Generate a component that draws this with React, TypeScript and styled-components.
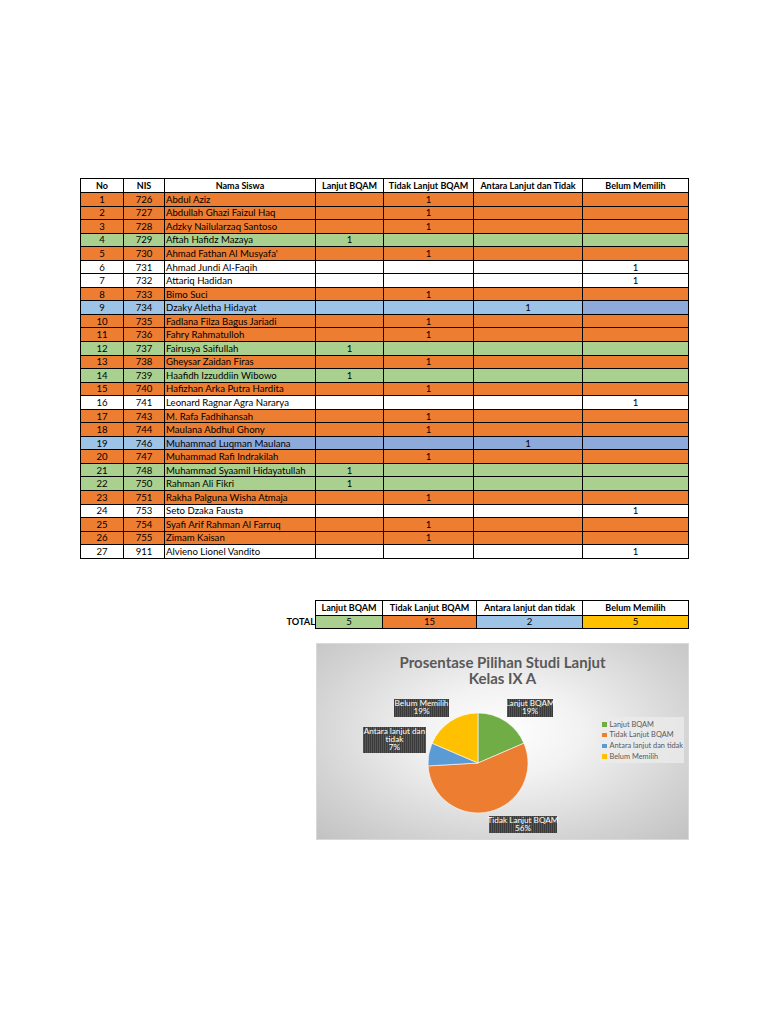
import React from "react";
import styled, { createGlobalStyle } from "styled-components";

const GlobalStyle = createGlobalStyle`
  html, body { margin: 0; padding: 0; background: #ffffff; }
  body { font-family: Lato, "Open Sans", "Liberation Sans", sans-serif; color: #000; }
`;

type Cat = "L" | "T" | "A" | "B";

const COLORS = {
  L: "#a9d08e",
  T: "#ed7d31",
  A: "#8eaadb",
  Alight: "#9dc3e6",
  B: "#ffffff",
  Y: "#ffc000",
};

const rows: [number, number, string, Cat, number?][] = [
  [1, 726, "Abdul Aziz", "T"],
  [2, 727, "Abdullah Ghazi Faizul Haq", "T"],
  [3, 728, "Adzky Nailularzaq Santoso", "T"],
  [4, 729, "Aftah Hafidz Mazaya", "L"],
  [5, 730, "Ahmad Fathan Al Musyafa'", "T"],
  [6, 731, "Ahmad Jundi Al-Faqih", "B"],
  [7, 732, "Attariq Hadidan", "B"],
  [8, 733, "Bimo Suci", "T"],
  [9, 734, "Dzaky Aletha Hidayat", "A", 6],
  [10, 735, "Fadlana Filza Bagus Jariadi", "T"],
  [11, 736, "Fahry Rahmatulloh", "T"],
  [12, 737, "Fairusya Saifullah", "L"],
  [13, 738, "Gheysar Zaidan Firas", "T"],
  [14, 739, "Haafidh Izzuddiin Wibowo", "L"],
  [15, 740, "Hafizhan Arka Putra Hardita", "T"],
  [16, 741, "Leonard Ragnar Agra Nararya", "B"],
  [17, 743, "M. Rafa Fadhihansah", "T"],
  [18, 744, "Maulana Abdhul Ghony", "T"],
  [19, 746, "Muhammad Luqman Maulana", "A", 2],
  [20, 747, "Muhammad Rafi Indrakilah", "T"],
  [21, 748, "Muhammad Syaamil Hidayatullah", "L"],
  [22, 750, "Rahman Ali Fikri", "L"],
  [23, 751, "Rakha Palguna Wisha Atmaja", "T"],
  [24, 753, "Seto Dzaka Fausta", "B"],
  [25, 754, "Syafi Arif Rahman Al Farruq", "T"],
  [26, 755, "Zimam Kaisan", "T"],
  [27, 911, "Alvieno Lionel Vandito", "B"],
];

const Page = styled.div`
  padding: 178px 0 0 80px;
  width: 688px;
`;

const Sheet = styled.table`
  border-collapse: collapse;
  table-layout: fixed;
  font-size: 9.6px;
`;

const HeadCell = styled.th<{ $w: number }>`
  width: ${(p) => p.$w}px;
  height: 13px;
  border: 1px solid #000;
  font-weight: 700;
  font-size: 9px;
  padding: 0;
  text-align: center;
  line-height: 11px;
  white-space: nowrap;
  overflow: hidden;
  background: #fff;
`;

const Row = styled.tr`
  height: 13.55px;
`;

const Cell = styled.td<{ $bg: string; $left?: boolean }>`
  border: 1px solid #000;
  background: ${(p) => p.$bg};
  padding: ${(p) => (p.$left ? "0 0 0 1px" : "0")};
  line-height: 11px;
  text-align: ${(p) => (p.$left ? "left" : "center")};
  white-space: nowrap;
  overflow: hidden;
`;

const TotalsTable = styled.table`
  border-collapse: collapse;
  table-layout: fixed;
  margin-top: 41px;
  font-size: 9.6px;
`;

const LabelCell = styled.td`
  width: 235px;
  padding: 0;
  text-align: right;
  font-weight: 700;
  font-size: 9.2px;
  line-height: 11px;
`;

const BlankCell = styled.td`
  width: 235px;
  padding: 0;
`;

const TotHead = styled.th<{ $w: number }>`
  width: ${(p) => p.$w}px;
  height: 14px;
  border: 1px solid #000;
  font-weight: 700;
  font-size: 9px;
  text-align: center;
  line-height: 11px;
  padding: 0;
  white-space: nowrap;
`;

const TotCell = styled.td<{ $bg: string }>`
  height: 12px;
  border: 1px solid #000;
  background: ${(p) => p.$bg};
  text-align: center;
  line-height: 11px;
  padding: 0;
`;

const Chart = styled.div`
  margin: 14px 0 0 236px;
  width: 373px;
  height: 197px;
  box-sizing: border-box;
  border: 1px solid #d9d9d9;
  background: radial-gradient(ellipse at 50% 45%, #ffffff 0%, #f2f2f2 30%, #d2d2d2 75%, #c2c2c2 100%);
  display: flex;
  flex-direction: column;
  font-family: Lato, "Open Sans", "Liberation Sans", sans-serif;
`;

const ChartTitle = styled.div`
  margin-top: 10px;
  height: 36px;
  text-align: center;
  font-size: 15px;
  line-height: 16px;
  font-weight: 700;
  color: #595959;
`;

const ChartBody = styled.div`
  display: flex;
  align-items: flex-start;
`;

const Legend = styled.div`
  margin-top: 28px;
  margin-left: 2px;
  width: 85px;
  height: 46px;
  box-sizing: border-box;
  padding: 3px 0 0 3px;
  background: rgba(235, 235, 235, 0.8);
  display: flex;
  flex-direction: column;
  gap: 1px;
`;

const LegendItem = styled.div`
  display: flex;
  align-items: center;
  gap: 3px;
  font-size: 7.4px;
  line-height: 9.6px;
  color: #595959;
  white-space: nowrap;
`;

const Swatch = styled.span<{ $c: string }>`
  width: 4.5px;
  height: 4.5px;
  background: ${(p) => p.$c};
  flex: none;
`;

const PIE = [
  { v: 5, c: "#70ad47" },
  { v: 15, c: "#ed7d31" },
  { v: 2, c: "#5b9bd5" },
  { v: 5, c: "#ffc000" },
];

function PieSvg() {
  const cx = 161;
  const cy = 74;
  const r = 50;
  const total = PIE.reduce((s, p) => s + p.v, 0);
  let a = -Math.PI / 2;
  const paths = PIE.map((p, i) => {
    const a2 = a + (p.v / total) * Math.PI * 2;
    const x1 = cx + r * Math.cos(a);
    const y1 = cy + r * Math.sin(a);
    const x2 = cx + r * Math.cos(a2);
    const y2 = cy + r * Math.sin(a2);
    const large = a2 - a > Math.PI ? 1 : 0;
    a = a2;
    return (
      <path
        key={i}
        d={`M${cx},${cy} L${x1},${y1} A${r},${r} 0 ${large} 1 ${x2},${y2} Z`}
        fill={p.c}
        stroke="#ffffff"
        strokeWidth={0.6}
      />
    );
  });
  const boxes = [
    { x: 77, y: 10, w: 55, h: 18, lines: ["Belum Memilih", "19%"] },
    { x: 190, y: 10, w: 46, h: 18, lines: ["Lanjut BQAM", "19%"] },
    { x: 46, y: 38, w: 63, h: 26, lines: ["Antara lanjut dan", "tidak", "7%"] },
    { x: 172, y: 127, w: 68, h: 17, lines: ["Tidak Lanjut BQAM", "56%"] },
  ];
  return (
    <svg width={280} height={150} viewBox="0 0 280 150">
      <defs>
        <pattern id="hatch" width="2" height="2" patternUnits="userSpaceOnUse">
          <rect width="2" height="2" fill="#3a3a3a" />
          <rect width="1" height="2" fill="#555555" />
        </pattern>
      </defs>
      {paths}
      {boxes.map((b, i) => (
        <g key={i}>
          <rect x={b.x} y={b.y} width={b.w} height={b.h} fill="url(#hatch)" />
          {b.lines.map((t, j) => (
            <text
              key={j}
              x={b.x + b.w / 2}
              y={b.y + 7 + j * 8}
              textAnchor="middle"
              fontSize={8.2}
              fill="#ffffff"
              fontFamily="Lato, 'Liberation Sans', sans-serif"
            >
              {t}
            </text>
          ))}
        </g>
      ))}
    </svg>
  );
}

const widths = [42, 40, 150, 67, 89, 108, 105];
const headers = ["No", "NIS", "Nama Siswa", "Lanjut BQAM", "Tidak Lanjut BQAM", "Antara Lanjut dan Tidak", "Belum Memilih"];
const catCol: Record<Cat, number> = { L: 3, T: 4, A: 5, B: 6 };

export default function App() {
  return (
    <>
      <GlobalStyle />
      <Page>
        <Sheet>
          <thead>
            <tr>
              {headers.map((h, i) => (
                <HeadCell key={h} $w={widths[i]}>
                  {h}
                </HeadCell>
              ))}
            </tr>
          </thead>
          <tbody>
            {rows.map(([no, nis, name, cat, split]) => {
              const bgFor = (col: number) => {
                if (cat === "A") return col < (split ?? 0) ? COLORS.Alight : COLORS.A;
                return COLORS[cat];
              };
              const vals: (string | number)[] = [no, nis, name, "", "", "", ""];
              vals[catCol[cat]] = 1;
              return (
                <Row key={no}>
                  {vals.map((v, c) => (
                    <Cell key={c} $bg={bgFor(c)} $left={c === 2}>
                      {v}
                    </Cell>
                  ))}
                </Row>
              );
            })}
          </tbody>
        </Sheet>

        <TotalsTable>
          <thead>
            <tr>
              <BlankCell />
              <TotHead $w={66}>Lanjut BQAM</TotHead>
              <TotHead $w={93}>Tidak Lanjut BQAM</TotHead>
              <TotHead $w={105}>Antara lanjut dan tidak</TotHead>
              <TotHead $w={105}>Belum Memilih</TotHead>
            </tr>
          </thead>
          <tbody>
            <tr>
              <LabelCell>TOTAL</LabelCell>
              <TotCell $bg={COLORS.L}>5</TotCell>
              <TotCell $bg={COLORS.T}>15</TotCell>
              <TotCell $bg={COLORS.Alight}>2</TotCell>
              <TotCell $bg={COLORS.Y}>5</TotCell>
            </tr>
          </tbody>
        </TotalsTable>

        <Chart>
          <ChartTitle>
            Prosentase Pilihan Studi Lanjut
            <br />
            Kelas IX A
          </ChartTitle>
          <ChartBody>
            <PieSvg />
            <Legend>
              <LegendItem>
                <Swatch $c="#70ad47" />
                Lanjut BQAM
              </LegendItem>
              <LegendItem>
                <Swatch $c="#ed7d31" />
                Tidak Lanjut BQAM
              </LegendItem>
              <LegendItem>
                <Swatch $c="#5b9bd5" />
                Antara lanjut dan tidak
              </LegendItem>
              <LegendItem>
                <Swatch $c="#ffc000" />
                Belum Memilih
              </LegendItem>
            </Legend>
          </ChartBody>
        </Chart>
      </Page>
    </>
  );
}
